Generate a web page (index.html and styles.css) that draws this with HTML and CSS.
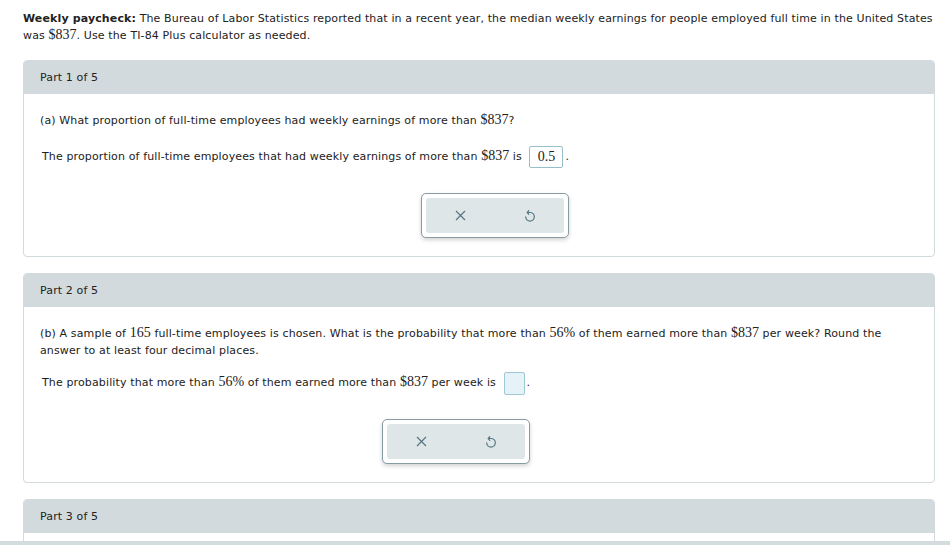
FILE: index.html
```html
<!DOCTYPE html>
<html lang="en">
<head>
<meta charset="utf-8">
<title>Weekly paycheck</title>
<link rel="stylesheet" href="styles.css">
</head>
<body>
<div class="page">
  <p class="intro"><b>Weekly paycheck:</b> The Bureau of Labor Statistics reported that in a recent year, the median weekly earnings for people employed full time in the United States was <span class="m">$837</span>. Use the TI-84 Plus calculator as needed.</p>

  <section class="card">
    <div class="card-head">Part 1 of 5</div>
    <div class="card-body">
      <p class="q">(a) What proportion of full-time employees had weekly earnings of more than <span class="m">$837</span>?</p>
      <div class="answer">
        <div class="line">The proportion of full-time employees that had weekly earnings of more than <span class="m">$837</span> is <span class="box filled">0.5</span>.</div>
        <div class="tools">
          <div class="tools-in">
            <span class="tool"><svg width="11" height="11" viewBox="0 0 11 11"><path d="M1 1 L10 10 M10 1 L1 10" stroke="#557782" stroke-width="1.2" fill="none"/></svg></span>
            <span class="tool"><svg width="12" height="13" viewBox="0 0 12 13"><path d="M6 3.5 A4.3 4.3 0 1 1 1.7 7.8" stroke="#557782" stroke-width="1.2" fill="none" stroke-linecap="round"/><path d="M4.8 1.6 L3.2 3.5 L4.8 5.3 M3.2 3.5 H6" stroke="#557782" stroke-width="1.2" fill="none" stroke-linecap="round" stroke-linejoin="round"/></svg></span>
          </div>
        </div>
      </div>
    </div>
  </section>

  <section class="card">
    <div class="card-head">Part 2 of 5</div>
    <div class="card-body">
      <p class="q q-tight">(b) A sample of <span class="m">165</span> full-time employees is chosen. What is the probability that more than <span class="m">56%</span> of them earned more than <span class="m">$837</span> per week? Round the answer to at least four decimal places.</p>
      <div class="answer">
        <div class="line">The probability that more than <span class="m">56%</span> of them earned more than <span class="m">$837</span> per week is <span class="box empty"></span>.</div>
        <div class="tools">
          <div class="tools-in">
            <span class="tool"><svg width="11" height="11" viewBox="0 0 11 11"><path d="M1 1 L10 10 M10 1 L1 10" stroke="#557782" stroke-width="1.2" fill="none"/></svg></span>
            <span class="tool"><svg width="12" height="13" viewBox="0 0 12 13"><path d="M6 3.5 A4.3 4.3 0 1 1 1.7 7.8" stroke="#557782" stroke-width="1.2" fill="none" stroke-linecap="round"/><path d="M4.8 1.6 L3.2 3.5 L4.8 5.3 M3.2 3.5 H6" stroke="#557782" stroke-width="1.2" fill="none" stroke-linecap="round" stroke-linejoin="round"/></svg></span>
          </div>
        </div>
      </div>
    </div>
  </section>

  <section class="card">
    <div class="card-head">Part 3 of 5</div>
    <div class="card-body tall"></div>
  </section>
</div>
<div class="bottom-bar"></div>
</body>
</html>
```

FILE: styles.css
```css
html, body {
  margin: 0;
  padding: 0;
  background: #fff;
}
body {
  font-family: Verdana, "DejaVu Sans", sans-serif;
  font-size: 11px;
  letter-spacing: 0.13px;
  line-height: 16px;
  color: #222;
}
.page {
  padding: 11px 15px 0 23px;
}
p { margin: 0; }
.intro {
  margin-bottom: 16px;
}
.intro b { font-weight: bold; }
.m {
  font-family: "Liberation Serif", "DejaVu Serif", serif;
  font-size: 14px;
  letter-spacing: 0;
}
.card {
  border: 1px solid #d3dadd;
  border-radius: 4px;
  margin-bottom: 16px;
  overflow: hidden;
}
.card-head {
  background: #d2dadd;
  height: 33px;
  line-height: 33px;
  padding-left: 16px;
}
.card-body {
  padding: 17px 16px 18px 16px;
}
.card-body.tall { height: 60px; }
.q {
  line-height: 17px;
  margin-bottom: 15px;
}
.q.q-tight {
  margin-bottom: 11px;
}
.answer {
  display: inline-flex;
  flex-direction: column;
  align-items: flex-end;
  padding-left: 2px;
}
.line {
  line-height: 24px;
  white-space: nowrap;
}
.box {
  display: inline-block;
  vertical-align: middle;
  box-sizing: border-box;
  border-radius: 2px;
  margin: 0 2px 0 4px;
}
.box.filled {
  width: 34px;
  height: 22px;
  border: 1px solid #95bfca;
  background: #fff;
  font-family: "Liberation Serif", "DejaVu Serif", serif;
  font-size: 14px;
  letter-spacing: 0;
  line-height: 20px;
  text-align: center;
}
.box.empty {
  width: 21px;
  height: 23px;
  border: 1px solid #9fc8d4;
  background: #e5f3f8;
}
.tools {
  margin-top: 24px;
  border: 1px solid #869ba2;
  border-radius: 5px;
  padding: 4px;
  background: #fff;
  box-shadow: 0 2px 4px rgba(0, 0, 0, 0.18);
}
.tools-in {
  display: flex;
  width: 138px;
  height: 35px;
  background: #dfe6e8;
  border-radius: 3px;
}
.tool {
  flex: 1;
  display: flex;
  align-items: center;
  justify-content: center;
}
.bottom-bar {
  position: fixed;
  left: 0;
  right: 0;
  bottom: 0;
  height: 4px;
  background: #d5dcdf;
}
```
